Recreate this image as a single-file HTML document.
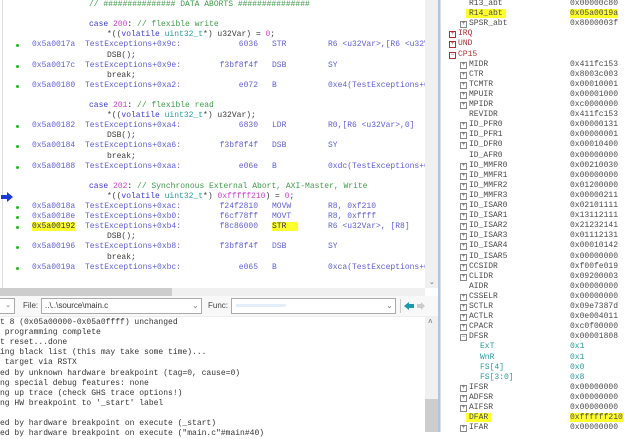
<!DOCTYPE html>
<html><head><meta charset="utf-8"><style>
*{margin:0;padding:0;box-sizing:border-box}
body{width:624px;height:432px;overflow:hidden;background:#fff;position:relative;font-family:"Liberation Mono",monospace;font-size:8px}
.a{position:absolute;white-space:pre;line-height:10px}
.ad{color:#5f5fd4}
.src{color:#3a3a3a}
.kw{color:#3a3acf}
.cm{color:#3f9a4a}
.num{color:#d040d0}
.ty{color:#2a9a9a}
.dot{position:absolute;width:3px;height:3px;border-radius:50%;background:#22bb22}
.hl{background:#ffff30}
.rn{color:#4a4a4a}
.rv{color:#4a4a4a}
.box{position:absolute;width:7px;height:7px;border:1px solid #888;font-size:6px;line-height:5px;text-align:center;color:#555;font-family:"Liberation Sans",sans-serif}
.red{color:#b03030}
.teal{color:#2a9a9a}
</style></head><body>
<div style="position:absolute;left:2px;top:0;width:1px;height:288px;background:#ddd"></div>
<div id="code"></div>
<svg style="position:absolute;left:1px;top:192px" width="12" height="10"><path d="M0 3h6V0l6 5-6 5V7H0z" fill="#1a3ad8"/></svg>
<div style="position:absolute;left:0;top:288px;width:425px;height:8px;background:#f0f0f0"></div>
<div style="position:absolute;left:0;top:288px;width:172px;height:8px;background:#cdcdcd"></div>
<div style="position:absolute;left:425px;top:0;width:13px;height:288px;background:#f0f0f0"></div>
<div style="position:absolute;left:429px;top:278px;font-size:7px;color:#666;font-family:'Liberation Sans'">⌄</div>
<div style="position:absolute;left:0;top:296px;width:438px;height:21px;background:#f8f8f8;border-bottom:1px solid #eee"></div>
<div style="position:absolute;left:-2px;top:298px;width:17px;height:16px;border:1px solid #aaa;background:#fff;font-size:7px;color:#777;text-align:right;padding-right:3px;line-height:14px;font-family:'Liberation Sans'">⌄</div>
<div class="a" style="left:23px;top:301px;font-family:'Liberation Sans';font-size:8px;color:#444">File:</div>
<div style="position:absolute;left:41px;top:298px;width:161px;height:16px;border:1px solid #aaa;background:#fff"></div>
<div class="a" style="left:45px;top:301px;font-family:'Liberation Sans';font-size:8px;color:#333">..\..\source\main.c</div>
<div class="a" style="left:192px;top:301px;font-family:'Liberation Sans';font-size:8px;color:#777">⌄</div>
<div class="a" style="left:208px;top:301px;font-family:'Liberation Sans';font-size:8px;color:#444">Func:</div>
<div style="position:absolute;left:231px;top:298px;width:165px;height:16px;border:1px solid #aaa;background:#fff"></div>
<div style="position:absolute;left:236px;top:304px;width:50px;height:3px;background:#e4eefa"></div>
<div class="a" style="left:386px;top:301px;font-family:'Liberation Sans';font-size:8px;color:#777">⌄</div>
<div style="position:absolute;left:400px;top:299px;width:1px;height:14px;background:#ccc"></div>
<svg style="position:absolute;left:404px;top:301px" width="22" height="10"><path d="M0 5l5-4v2h5v4H5v2z" fill="#1a9aaa"/><path d="M13 3h4V1l4 4-4 4V7h-4z" fill="#ccc"/></svg>
<div id="out"></div>
<div style="position:absolute;left:425px;top:317px;width:13px;height:115px;background:#f0f0f0"></div>
<div style="position:absolute;left:425px;top:399px;width:13px;height:33px;background:#cdcdcd"></div>
<div class="a" style="left:428px;top:317px;font-family:'Liberation Sans';color:#666;font-size:8px">˄</div>
<div style="position:absolute;left:438px;top:0;width:2px;height:432px;background:#a9c8e8"></div>
<div style="position:absolute;left:440px;top:0;width:184px;height:432px;background:#fff;border-left:1px solid #ddd"></div>
<div id="reg"></div>
<script>
var C=89,S=107;
var code=[
[0,C,'<span class="cm">// ############### DATA ABORTS ###############</span>'],
[2,C,'<span class="kw">case</span> <span class="num">200</span>: <span class="cm">// flexible write</span>'],
[3,S,'<span class="src">*((<span class="kw">volatile</span> <span class="ty">uint32_t</span>*) u32Var) = <span class="num">0</span>;</span>'],
[4,0,'A0x5a0017a|TestExceptions+0x9c:|6036|STR|R6 &lt;u32Var&gt;,[R6 &lt;u32Var&gt;'],
[5,S,'<span class="src">DSB();</span>'],
[6,0,'A0x5a0017c|TestExceptions+0x9e:|f3bf8f4f|DSB|SY'],
[7,S,'<span class="src">break;</span>'],
[8,0,'A0x5a00180|TestExceptions+0xa2:|e072|B|0xe4(TestExceptions+0'],
[10,C,'<span class="kw">case</span> <span class="num">201</span>: <span class="cm">// flexible read</span>'],
[11,S,'<span class="src">*((<span class="kw">volatile</span> <span class="ty">uint32_t</span>*) u32Var);</span>'],
[12,0,'A0x5a00182|TestExceptions+0xa4:|6830|LDR|R0,[R6 &lt;u32Var&gt;,0]'],
[13,S,'<span class="src">DSB();</span>'],
[14,0,'A0x5a00184|TestExceptions+0xa6:|f3bf8f4f|DSB|SY'],
[15,S,'<span class="src">break;</span>'],
[16,0,'A0x5a00188|TestExceptions+0xaa:|e06e|B|0xdc(TestExceptions+0'],
[18,C,'<span class="kw">case</span> <span class="num">202</span>: <span class="cm">// Synchronous External Abort, AXI-Master, Write</span>'],
[19,S,'<span class="src">*((<span class="kw">volatile</span> <span class="ty">uint32_t</span>*) <span class="num">0xfffff210</span>) = <span class="num">0</span>;</span>'],
[20,0,'A0x5a0018a|TestExceptions+0xac:|f24f2810|MOVW|R8, 0xf210'],
[21,0,'A0x5a0018e|TestExceptions+0xb0:|f6cf78ff|MOVT|R8, 0xffff'],
[22,0,'H0x5a00192|TestExceptions+0xb4:|f8c86000|STR|R6 &lt;u32Var&gt;, [R8]'],
[23,S,'<span class="src">DSB();</span>'],
[24,0,'A0x5a00196|TestExceptions+0xb8:|f3bf8f4f|DSB|SY'],
[25,S,'<span class="src">break;</span>'],
[26,0,'A0x5a0019a|TestExceptions+0xbc:|e065|B|0xca(TestExceptions+0']
];
var h='';
code.forEach(function(c){
 var y=(c[0]*10.1).toFixed(1);
 var s=c[2];
 if(s[0]=='A'||s[0]=='H'){
  var hl=s[0]=='H';var p=s.slice(1).split('|');
  h+='<div class="dot" style="left:16px;top:'+(+y+4)+'px"></div>';
  h+='<div class="a ad" style="left:32px;top:'+y+'px"><span'+(hl?' class="hl" style="color:#333"':'')+'>'+p[0]+'</span></div>';
  h+='<div class="a ad" style="left:85px;top:'+y+'px">'+p[1]+'</div>';
  h+='<div class="a ad" style="left:200px;width:58px;text-align:right;top:'+y+'px">'+p[2]+'</div>';
  h+='<div class="a ad" style="left:272px;top:'+y+'px"><span'+(hl?' class="hl" style="padding-right:12px;color:#333"':'')+'>'+p[3]+'</span></div>';
  h+='<div class="a ad" style="left:328px;top:'+y+'px;width:97px;overflow:hidden">'+p[4]+'</div>';
 } else h+='<div class="a" style="left:'+c[1]+'px;top:'+y+'px">'+s+'</div>';
});
document.getElementById('code').innerHTML=h;
var out=['t 8 (0x05a00000-0x05a0ffff) unchanged',' programming complete','t reset...done','ing black list (this may take some time)...',' target via RSTX','ed by unknown hardware breakpoint (tag=0, cause=0)','ng special debug features: none','ng up trace (check GHS trace options!)','ng HW breakpoint to \'_start\' label','','ed by hardware breakpoint on execute (_start)','ed by hardware breakpoint on execute ("main.c"#main#40)'];
h='';out.forEach(function(t,i){h+='<div class="a" style="left:0;top:'+(318+i*10.1).toFixed(1)+'px;color:#333">'+t.replace(/</g,'&lt;')+'</div>';});
document.getElementById('out').innerHTML=h;
var R=[['R13_abt','0x00000c80',0],['R14_abt','0x05a0019a',0,1],['SPSR_abt','0x8000003f',1],['IRQ','',2],['UND','',2],['CP15','',3],
['MIDR','0x411fc153',1],['CTR','0x8003c003',1],['TCMTR','0x00010001',1],['MPUIR','0x00001000',1],['MPIDR','0xc0000000',1],['REVIDR','0x411fc153',0],
['ID_PFR0','0x00000131',1],['ID_PFR1','0x00000001',1],['ID_DFR0','0x00010400',1],['ID_AFR0','0x00000000',0],['ID_MMFR0','0x00210030',1],['ID_MMFR1','0x00000000',1],['ID_MMFR2','0x01200000',1],['ID_MMFR3','0x00000211',1],
['ID_ISAR0','0x02101111',1],['ID_ISAR1','0x13112111',1],['ID_ISAR2','0x21232141',1],['ID_ISAR3','0x01112131',1],['ID_ISAR4','0x00010142',1],['ID_ISAR5','0x00000000',1],
['CCSIDR','0xf00fe019',1],['CLIDR','0x09200003',1],['AIDR','0x00000000',0],['CSSELR','0x00000000',1],['SCTLR','0x09e7387d',1],['ACTLR','0x0e004011',1],['CPACR','0xc0f00000',1],['DFSR','0x00001808',4],
['ExT','0x1',5],['WnR','0x1',5],['FS[4]','0x0',5],['FS[3:0]','0x8',5],['IFSR','0x00000000',1],['ADFSR','0x00000000',1],['AIFSR','0x00000000',1],['DFAR','0xffffff210',0,1],['IFAR','0x00000000',1]];
h='';R.forEach(function(r,i){
 var y=(-1+i*10.1).toFixed(1);var t=r[2];var x=469,cls='rn',vc='rv';
 if(t==1||t==4)h+='<div class="box" style="left:460px;top:'+(+y+2)+'px">'+(t==4?'−':'+')+'</div>';
 if(t==2||t==3){x=458;cls='red';h+='<div class="box" style="left:449px;top:'+(+y+2)+'px;border-color:#b03030;color:#b03030">'+(t==3?'−':'+')+'</div>';}
 if(t==5){x=480;cls='teal';vc='teal';}
 h+='<div class="a '+cls+'" style="left:'+x+'px;top:'+y+'px"><span'+(r[3]?' class="hl" style="padding:0 3px;margin-left:-3px"':'')+'>'+r[0]+'</span></div>';
 h+='<div class="a '+vc+'" style="left:570px;top:'+y+'px"><span'+(r[3]?' class="hl"':'')+'>'+r[1]+'</span></div>';
});
document.getElementById('reg').innerHTML=h;
</script>
</body></html>
